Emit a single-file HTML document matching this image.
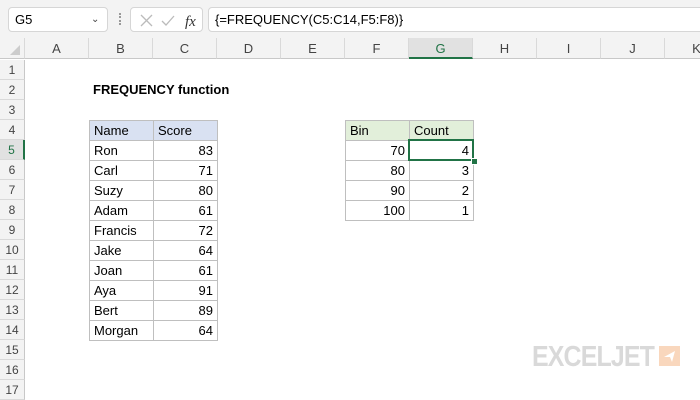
<!DOCTYPE html>
<html><head><style>
body{margin:0;width:700px;height:400px;overflow:hidden;background:#fff;font-family:"Liberation Sans",sans-serif;position:relative}
.a{position:absolute}
.top{left:0;top:0;width:700px;height:38px;background:#f3f3f3}
.box{background:#fff;border:1px solid #d6d6d6;border-radius:4px;box-sizing:border-box}
.ch{top:38px;height:21px;background:#f3f3f3;border-bottom:1px solid #c8c8c8;box-sizing:border-box;font-size:13px;color:#444;text-align:center;line-height:21px;border-right:1px solid #d9d9d9}
.rh{left:0;width:25px;height:20px;background:#f3f3f3;border-right:1px solid #c8c8c8;border-bottom:1px solid #d9d9d9;box-sizing:border-box;font-size:12px;color:#444;text-align:center;line-height:20px}
.c{height:21px;box-sizing:border-box;font-size:13px;line-height:20px;padding:0 4px;color:#000;border:1px solid #bfbfbf;margin:-1px 0 0 -1px}
.r{text-align:right}
</style></head><body>
<div class="a top"></div>
<div class="a box" style="left:8px;top:7px;width:100px;height:25px;font-size:13px;line-height:23px;padding-left:6px">G5<span class="a" style="left:82px;top:0;font-size:10px;color:#444">&#8964;</span></div>
<div class="a" style="left:119px;top:13px;width:2px;height:12px;border-left:2px dotted #999"></div>
<div class="a box" style="left:130px;top:7px;width:73px;height:25px"><svg width="73" height="25"><path d="M10 7l11 11M21 7L10 18" stroke="#bbb" stroke-width="1.3" fill="none"/><path d="M31 13l4 4 8-9" stroke="#bbb" stroke-width="1.3" fill="none"/><text x="54" y="18" font-family="Liberation Serif" font-style="italic" font-size="15" fill="#333">fx</text></svg></div>
<div class="a box" style="left:208px;top:7px;width:500px;height:25px;font-size:13px;line-height:23px;padding-left:6px">{=FREQUENCY(C5:C14,F5:F8)}</div>
<div class="a ch" style="left:0;width:25px"><svg width="25" height="21"><path d="M20 17L20 7L10 17Z" fill="#ccc"/></svg></div>
<div class="a ch" style="left:25px;width:64px">A</div><div class="a ch" style="left:89px;width:64px">B</div><div class="a ch" style="left:153px;width:64px">C</div><div class="a ch" style="left:217px;width:64px">D</div><div class="a ch" style="left:281px;width:64px">E</div><div class="a ch" style="left:345px;width:64px">F</div><div class="a ch" style="left:409px;width:64px;background:#e1e1e1;color:#217346;border-bottom:2px solid #217346">G</div><div class="a ch" style="left:473px;width:64px">H</div><div class="a ch" style="left:537px;width:64px">I</div><div class="a ch" style="left:601px;width:64px">J</div><div class="a ch" style="left:665px;width:64px">K</div>
<div class="a rh" style="top:60px">1</div><div class="a rh" style="top:80px">2</div><div class="a rh" style="top:100px">3</div><div class="a rh" style="top:120px">4</div><div class="a rh" style="top:140px;background:#e1e1e1;color:#217346;border-right:2px solid #217346">5</div><div class="a rh" style="top:160px">6</div><div class="a rh" style="top:180px">7</div><div class="a rh" style="top:200px">8</div><div class="a rh" style="top:220px">9</div><div class="a rh" style="top:240px">10</div><div class="a rh" style="top:260px">11</div><div class="a rh" style="top:280px">12</div><div class="a rh" style="top:300px">13</div><div class="a rh" style="top:320px">14</div><div class="a rh" style="top:340px">15</div><div class="a rh" style="top:360px">16</div><div class="a rh" style="top:380px">17</div>
<div class="a" style="left:93px;top:80px;font-size:13px;line-height:20px;font-weight:bold">FREQUENCY function</div>
<div class="a" style="left:90px;top:121px;display:grid;grid-template-columns:64px 64px">
<div class="c" style="background:#d9e1f2">Name</div><div class="c" style="background:#d9e1f2">Score</div>
<div class="c">Ron</div><div class="c r">83</div>
<div class="c">Carl</div><div class="c r">71</div>
<div class="c">Suzy</div><div class="c r">80</div>
<div class="c">Adam</div><div class="c r">61</div>
<div class="c">Francis</div><div class="c r">72</div>
<div class="c">Jake</div><div class="c r">64</div>
<div class="c">Joan</div><div class="c r">61</div>
<div class="c">Aya</div><div class="c r">91</div>
<div class="c">Bert</div><div class="c r">89</div>
<div class="c">Morgan</div><div class="c r">64</div>
</div>
<div class="a" style="left:346px;top:121px;display:grid;grid-template-columns:64px 64px">
<div class="c" style="background:#e2efda">Bin</div><div class="c" style="background:#e2efda">Count</div>
<div class="c r">70</div><div class="c r">4</div>
<div class="c r">80</div><div class="c r">3</div>
<div class="c r">90</div><div class="c r">2</div>
<div class="c r">100</div><div class="c r">1</div>
</div>
<div class="a" style="left:408px;top:139px;width:66px;height:22px;border:2px solid #217346;box-sizing:border-box"></div>
<div class="a" style="left:471px;top:158px;width:5px;height:5px;background:#217346;border:1px solid #fff"></div>
<div class="a" style="left:532px;top:342px;font-size:29px;font-weight:bold;color:#d9d9d9;letter-spacing:-1px;line-height:30px;transform:scaleX(0.86);transform-origin:left">EXCELJET</div>
<div class="a" style="left:659px;top:346px;width:21px;height:20px;background:#f9d7bd"><svg width="21" height="20"><path d="M5 11L16 5L13 16L11 11Z" fill="#fff"/></svg></div>
</body></html>
